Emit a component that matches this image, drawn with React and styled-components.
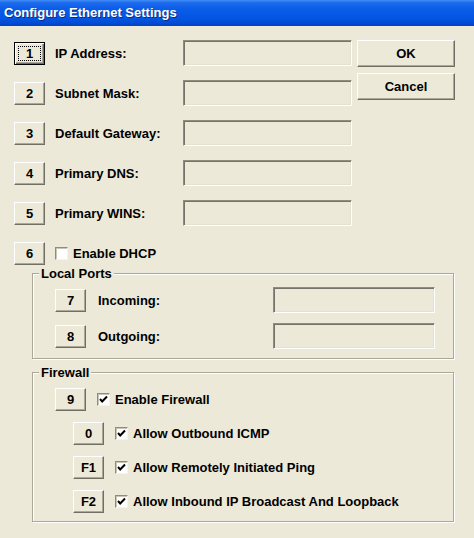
import React from 'react';
import styled, { createGlobalStyle, css } from 'styled-components';

const GlobalStyle = createGlobalStyle`
  html, body {
    margin: 0;
    padding: 0;
    background: #ece9d8;
  }
  * {
    box-sizing: border-box;
  }
`;

const font = `font-family: "Liberation Sans", Arial, sans-serif;
  font-weight: bold;
  font-size: 13px;
  line-height: 15px;
  color: #000;`;

const Window = styled.div`
  ${font};
  width: 474px;
  height: 538px;
  display: flex;
  flex-direction: column;
  background: #ece9d8;
  overflow: hidden;
`;

const TitleBar = styled.div`
  height: 26px;
  flex: none;
  display: flex;
  align-items: center;
  padding: 0 0 1px 4px;
  color: #fff;
  text-shadow: 1px 1px 0 #0b2a8a;
  background: linear-gradient(
    to bottom,
    #3f8cf6 0,
    #1c69ec 3px,
    #0a5de8 35%,
    #0456e2 70%,
    #034ad3 90%,
    #0240c2 100%
  );
`;

const Body = styled.div`
  flex: 1;
  padding: 14px 0 0 14px;
  display: flex;
  flex-direction: column;
`;

const TopSection = styled.div`
  display: flex;
  align-items: flex-start;
`;

const FieldList = styled.div`
  display: flex;
  flex-direction: column;
  gap: 14px;
`;

const Row = styled.div`
  display: flex;
  align-items: center;
  height: ${(p) => p.$height || 26}px;
  padding-left: ${(p) => p.$indent || 0}px;
`;

const raised = css`
  border: 1px solid;
  border-color: #fff #716f64 #716f64 #fff;
  box-shadow: inset -1px -1px 0 #aca899;
  background: #ece9d8;
`;

const KeyButton = styled.div`
  ${raised};
  flex: none;
  width: 31px;
  height: 23px;
  display: flex;
  align-items: center;
  justify-content: center;
  margin-right: ${(p) => p.$gap || 10}px;
  ${(p) =>
    p.$focused &&
    css`
      border-color: #000;
      box-shadow: inset 1px 1px 0 #fff, inset -1px -1px 0 #716f64,
        inset -2px -2px 0 #aca899;
      outline: 1px dotted #000;
      outline-offset: -5px;
    `}
`;

const Label = styled.span`
  flex: none;
  width: ${(p) => p.$width}px;
  white-space: nowrap;
`;

const Field = styled.div`
  flex: none;
  width: ${(p) => p.$width}px;
  height: 26px;
  border: 1px solid;
  border-color: #8f8c7f #fff #fff #8f8c7f;
  box-shadow: inset 1px 1px 0 #76746a, inset -1px -1px 0 #e4e1d2;
  background: #ece9d8;
`;

const DialogButtons = styled.div`
  display: flex;
  flex-direction: column;
  gap: 6px;
  margin-left: 5px;
`;

const PushButton = styled.div`
  ${raised};
  width: 98px;
  height: 27px;
  display: flex;
  align-items: center;
  justify-content: center;
`;

const CheckBoxFrame = styled.span`
  flex: none;
  width: 13px;
  height: 13px;
  margin-right: 5px;
  border: 1px solid;
  border-color: #8f8c7f #f4f3ee #f4f3ee #8f8c7f;
  box-shadow: inset 1px 1px 0 #c9c6b8;
  background: #fff;
  display: flex;
  align-items: center;
  justify-content: center;
`;

const CheckBox = ({ checked }) => (
  <CheckBoxFrame>
    {checked && (
      <svg width="11" height="11" viewBox="0 0 11 11">
        <polyline
          points="2,5 4.2,7.5 9,2.5"
          fill="none"
          stroke="#000"
          strokeWidth="2"
        />
      </svg>
    )}
  </CheckBoxFrame>
);

const GroupBox = styled.fieldset`
  margin: ${(p) => p.$top || 0}px 0 0 18px;
  width: 422px;
  min-width: 0;
  padding: ${(p) => p.$pad};
  border: 1px solid #aca899;
  box-shadow: inset 1px 1px 0 #fff, 1px 1px 0 #fff;
  display: flex;
  flex-direction: column;
  gap: ${(p) => p.$gap}px;
`;

const Legend = styled.legend`
  padding: 0 2px;
  background: #ece9d8;
  line-height: 15px;
`;

const fields = [
  { key: '1', label: 'IP Address:', focused: true },
  { key: '2', label: 'Subnet Mask:' },
  { key: '3', label: 'Default Gateway:' },
  { key: '4', label: 'Primary DNS:' },
  { key: '5', label: 'Primary WINS:' },
];

const ports = [
  { key: '7', label: 'Incoming:' },
  { key: '8', label: 'Outgoing:' },
];

const firewall = [
  { key: '9', label: 'Enable Firewall', indent: 16 },
  { key: '0', label: 'Allow Outbound ICMP', indent: 34 },
  { key: 'F1', label: 'Allow Remotely Initiated Ping', indent: 34 },
  { key: 'F2', label: 'Allow Inbound IP Broadcast And Loopback', indent: 34 },
];

const App = () => (
  <Window>
    <GlobalStyle />
    <TitleBar>Configure Ethernet Settings</TitleBar>
    <Body>
      <TopSection>
        <FieldList>
          {fields.map((f) => (
            <Row key={f.key}>
              <KeyButton $focused={f.focused}>{f.key}</KeyButton>
              <Label $width={128}>{f.label}</Label>
              <Field $width={169} />
            </Row>
          ))}
          <Row>
            <KeyButton>6</KeyButton>
            <CheckBox />
            <span>Enable DHCP</span>
          </Row>
        </FieldList>
        <DialogButtons>
          <PushButton>OK</PushButton>
          <PushButton>Cancel</PushButton>
        </DialogButtons>
      </TopSection>

      <GroupBox $pad="6px 8px 9px 6px" $gap={10}>
        <Legend>Local Ports</Legend>
        {ports.map((p) => (
          <Row key={p.key} $indent={16}>
            <KeyButton $gap={12}>{p.key}</KeyButton>
            <Label $width={175}>{p.label}</Label>
            <Field $width={162} />
          </Row>
        ))}
      </GroupBox>

      <GroupBox $top={6} $pad="8px 8px 8px 6px" $gap={11}>
        <Legend>Firewall</Legend>
        {firewall.map((r) => (
          <Row key={r.key} $indent={r.indent} $height={23}>
            <KeyButton $gap={11}>{r.key}</KeyButton>
            <CheckBox checked />
            <span>{r.label}</span>
          </Row>
        ))}
      </GroupBox>
    </Body>
  </Window>
);

export default App;
